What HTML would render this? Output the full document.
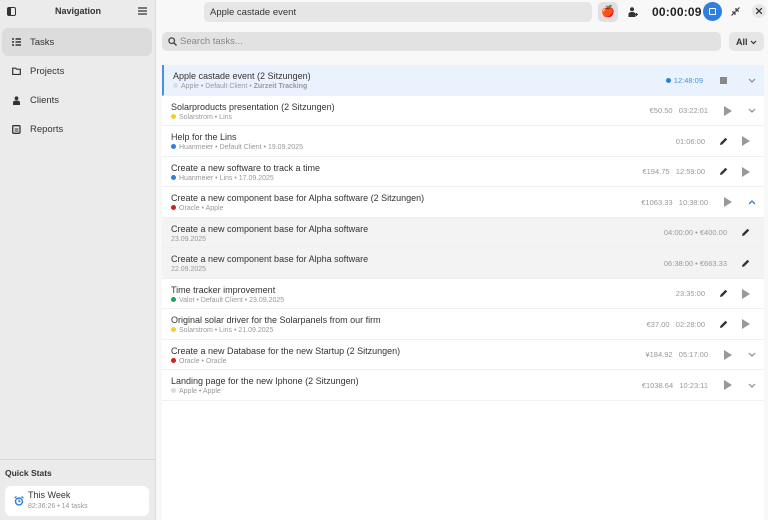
<!DOCTYPE html>
<html><head><meta charset="utf-8"><style>
*{box-sizing:border-box;margin:0;padding:0}
body{width:768px;height:520px;overflow:hidden;font-family:"Liberation Sans",sans-serif;background:#f8f8f8;position:relative;color:#222}
.side{position:absolute;left:0;top:0;width:156px;height:520px;background:#ebebeb;border-right:1px solid #ddd}
.navh{position:absolute;top:6px;left:0;width:156px;text-align:center;font-weight:bold;font-size:9px;color:#333}
.nav{position:absolute;left:2px;width:150px;height:28px;font-size:9.5px;color:#333;display:flex;align-items:center;padding-left:10px;gap:9px;border-radius:6px}
.nav.act{background:#dcdcdc}
.qs{position:absolute;left:0;top:459px;width:156px;border-top:1px solid #d8d8d8;padding:8px 5px;font-weight:bold;font-size:8.5px;color:#333}
.card{position:absolute;left:5px;top:486px;width:144px;height:30px;background:#fff;border-radius:6px;padding:4px 0 0 23px;font-size:9px;color:#333}
.card small{display:block;font-size:7px;color:#999;margin-top:3px}
.topin{position:absolute;left:204px;top:2px;width:388px;height:20px;background:#e6e6e6;border-radius:5px;font-size:9.5px;padding:5px 6px;color:#333}
.search{position:absolute;left:162px;top:32px;width:559px;height:19px;background:#e2e2e2;border-radius:5px;font-size:9.5px;color:#888;padding:4px 0 0 18px}
.all{position:absolute;left:729px;top:32px;width:35px;height:19px;background:#e6e6e6;border-radius:5px;font-size:9px;font-weight:bold;padding:5px 7px;color:#333;white-space:nowrap}
.list{position:absolute;left:162px;top:65px;width:602px;height:455px;background:#fff;border-radius:5px 5px 0 0}
.row{height:30.5px;position:relative;border-bottom:1px solid #f0f0f0;padding:6px 0 0 9px}
.row .t{font-size:9px;color:#333}
.row .m{font-size:7px;color:#999;margin-top:2px}
.dot{display:inline-block;width:5px;height:5px;border-radius:50%;margin-right:3px;vertical-align:0}
.r{position:absolute;right:0;top:0;height:30px;display:flex;align-items:center;font-size:7.5px;color:#999;white-space:nowrap}
.play{width:0;height:0;border-left:8px solid #999;border-top:5px solid transparent;border-bottom:5px solid transparent;display:inline-block}
.chev{width:24px;display:flex;justify-content:center}
.pen{margin:0 14px;display:inline-flex}
.sub{background:#f3f3f3}
</style></head><body>
<div class="side">
<svg style="position:absolute;left:7px;top:7px" width="9" height="9"><rect x=".5" y=".5" width="8" height="8" rx="1.5" fill="none" stroke="#333"/><rect x="1" y="1" width="3" height="7" fill="#333"/></svg>
<div class="navh">Navigation</div>
<svg style="position:absolute;left:138px;top:7px" width="9" height="8"><path d="M0 1h9M0 4h9M0 7h9" stroke="#333" stroke-width="1.3"/></svg>
<div class="nav act" style="top:28px"><svg width="9" height="8"><path d="M0 1h2M0 4h2M0 7h2M3.5 1h5.5M3.5 4h5.5M3.5 7h5.5" stroke="#333" stroke-width="1.4"/></svg>Tasks</div>
<div class="nav" style="top:57px"><svg width="9" height="8"><path d="M.7 1.2h3l1 1h3.6v5.3H.7z" fill="none" stroke="#333" stroke-width="1.2"/></svg>Projects</div>
<div class="nav" style="top:86px"><svg width="9" height="9"><circle cx="4.5" cy="2.3" r="1.9" fill="#333"/><path d="M1 9v-2.5q0-2 3.5-2t3.5 2V9z" fill="#333"/></svg>Clients</div>
<div class="nav" style="top:115px"><svg width="9" height="9"><rect x=".7" y=".7" width="7.3" height="7.6" rx="1" fill="none" stroke="#333" stroke-width="1.3"/><path d="M2.5 4h4M2.5 6h4" stroke="#333"/></svg>Reports</div>
<div class="qs">Quick Stats</div>
<div class="card"><svg style="position:absolute;left:9px;top:10px" width="10" height="10"><circle cx="5" cy="5.5" r="3.5" fill="none" stroke="#2d7fe0" stroke-width="1.4"/><path d="M0.5 2L2.5 0.5M9.5 2L7.5 .5M5 3.5v2h1.5" stroke="#2d7fe0" stroke-width="1.2" fill="none"/></svg>This Week<small>82:36:26 • 14 tasks</small></div>
</div>
<div class="topin">Apple castade event</div>
<div style="position:absolute;left:598px;top:2px;width:20px;height:20px;background:#e0e0e0;border-radius:5px;text-align:center;font-size:11px;line-height:20px">🍎</div>
<svg style="position:absolute;left:628px;top:7px" width="10" height="10"><circle cx="4" cy="2.3" r="2" fill="#333"/><path d="M0.5 10v-3q0-2 3.5-2t3.5 2v3z" fill="#333"/><path d="M7 7.5h3M8.5 6v3" stroke="#333"/></svg>
<div style="position:absolute;left:652px;top:5px;font-size:12px;font-weight:bold;color:#222;letter-spacing:.2px">00:00:09</div>
<div style="position:absolute;left:703px;top:2px;width:19px;height:19px;border-radius:50%;background:#2d7fe0"><div style="position:absolute;left:6px;top:6px;width:7px;height:7px;border:1.5px solid #fff;border-radius:1px"></div></div>
<svg style="position:absolute;left:731px;top:7px" width="9" height="9"><path d="M0.5 8.5L4 5M1 5h3v3M8.5 .5L5 4M5 1v3h3" stroke="#333" fill="none" stroke-width="1.1"/></svg>
<div style="position:absolute;left:752px;top:4px;width:14px;height:14px;border-radius:50%;background:#e6e6e6"><svg style="position:absolute;left:4px;top:4px" width="6" height="6"><path d="M0 0L6 6M6 0L0 6" stroke="#333" stroke-width="1.3"/></svg></div>
<div class="search"><svg style="position:absolute;left:6px;top:5px" width="9" height="9"><circle cx="3.7" cy="3.7" r="2.8" fill="none" stroke="#444" stroke-width="1.3"/><path d="M5.8 5.8L8.5 8.5" stroke="#444" stroke-width="1.4"/></svg>Search tasks...</div>
<div class="all">All <svg width="7" height="5"><path d="M1 1l2.5 2.5L6 1" stroke="#333" fill="none" stroke-width="1.2"/></svg></div>
<div class="list">
<div class="row" style="background:#eaf2fd;border-left:2px solid #4a90e2"><div class="t">Apple castade event (2 Sitzungen)</div><div class="m"><span class="dot" style="background:#ddd"></span>Apple • Default Client • <b>Zurzeit Tracking</b></div><div class="r"><span style="color:#4a90e2"><span class="dot" style="background:#2d7fe0"></span>12:48:09</span><span style="display:inline-block;width:7px;height:7px;background:#888;margin:0 13px 0 17px"></span><span class="chev"><svg width="8" height="5"><path d="M1 1l3 3 3-3" stroke="#888" fill="none" stroke-width="1.2"/></svg></span></div></div>
<div class="row"><div class="t">Solarproducts presentation (2 Sitzungen)</div><div class="m"><span class="dot" style="background:#f0d030"></span>Solarstrom • Lins</div><div class="r">€50.50&nbsp;&nbsp;&nbsp;03:22:01<span class="play" style="margin:0 8px 0 16px"></span><span class="chev"><svg width="8" height="5"><path d="M1 1l3 3 3-3" stroke="#888" fill="none" stroke-width="1.2"/></svg></span></div></div>
<div class="row"><div class="t">Help for the Lins</div><div class="m"><span class="dot" style="background:#2d7fe0"></span>Huanmeier • Default Client • 19.09.2025</div><div class="r">01:06:00<span class="pen"><svg width="9" height="9"><path d="M1 8l.5-2.2L6.5.8l1.7 1.7-5 5z" fill="#333"/></svg></span><span class="play" style="margin-right:14px"></span></div></div>
<div class="row"><div class="t">Create a new software to track a time</div><div class="m"><span class="dot" style="background:#2d7fe0"></span>Huanmeier • Lins • 17.09.2025</div><div class="r">€194.75&nbsp;&nbsp;&nbsp;12:59:00<span class="pen"><svg width="9" height="9"><path d="M1 8l.5-2.2L6.5.8l1.7 1.7-5 5z" fill="#333"/></svg></span><span class="play" style="margin-right:14px"></span></div></div>
<div class="row"><div class="t">Create a new component base for Alpha software (2 Sitzungen)</div><div class="m"><span class="dot" style="background:#d02020"></span>Oracle • Apple</div><div class="r">€1063.33&nbsp;&nbsp;&nbsp;10:38:00<span class="play" style="margin:0 8px 0 16px"></span><span class="chev"><svg width="8" height="5"><path d="M1 4l3-3 3 3" stroke="#2d7fe0" fill="none" stroke-width="1.3"/></svg></span></div></div>
<div class="row sub"><div class="t">Create a new component base for Alpha software</div><div class="m">23.09.2025</div><div class="r">04:00:00 • €400.00<span class="pen"><svg width="9" height="9"><path d="M1 8l.5-2.2L6.5.8l1.7 1.7-5 5z" fill="#333"/></svg></span></div></div>
<div class="row sub"><div class="t">Create a new component base for Alpha software</div><div class="m">22.09.2025</div><div class="r">06:38:00 • €663.33<span class="pen"><svg width="9" height="9"><path d="M1 8l.5-2.2L6.5.8l1.7 1.7-5 5z" fill="#333"/></svg></span></div></div>
<div class="row"><div class="t">Time tracker improvement</div><div class="m"><span class="dot" style="background:#20a060"></span>Valot • Default Client • 23.09.2025</div><div class="r">23:35:00<span class="pen"><svg width="9" height="9"><path d="M1 8l.5-2.2L6.5.8l1.7 1.7-5 5z" fill="#333"/></svg></span><span class="play" style="margin-right:14px"></span></div></div>
<div class="row"><div class="t">Original solar driver for the Solarpanels from our firm</div><div class="m"><span class="dot" style="background:#f0d030"></span>Solarstrom • Lins • 21.09.2025</div><div class="r">€37.00&nbsp;&nbsp;&nbsp;02:28:00<span class="pen"><svg width="9" height="9"><path d="M1 8l.5-2.2L6.5.8l1.7 1.7-5 5z" fill="#333"/></svg></span><span class="play" style="margin-right:14px"></span></div></div>
<div class="row"><div class="t">Create a new Database for the new Startup (2 Sitzungen)</div><div class="m"><span class="dot" style="background:#d02020"></span>Oracle • Oracle</div><div class="r">¥184.92&nbsp;&nbsp;&nbsp;05:17:00<span class="play" style="margin:0 8px 0 16px"></span><span class="chev"><svg width="8" height="5"><path d="M1 1l3 3 3-3" stroke="#888" fill="none" stroke-width="1.2"/></svg></span></div></div>
<div class="row"><div class="t">Landing page for the new Iphone (2 Sitzungen)</div><div class="m"><span class="dot" style="background:#ddd"></span>Apple • Apple</div><div class="r">€1038.64&nbsp;&nbsp;&nbsp;10:23:11<span class="play" style="margin:0 8px 0 16px"></span><span class="chev"><svg width="8" height="5"><path d="M1 1l3 3 3-3" stroke="#888" fill="none" stroke-width="1.2"/></svg></span></div></div>
</div>
</body></html>
